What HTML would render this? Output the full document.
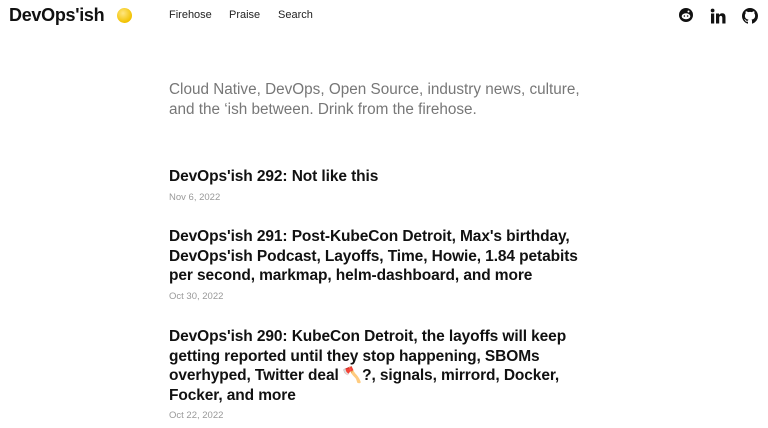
<!DOCTYPE html>
<html><head><meta charset="utf-8"><style>
body{margin:0;background:#fff;font-family:"Liberation Sans",sans-serif;color:#111;width:768px;height:428px;overflow:hidden;position:relative}
.logo{position:absolute;left:9px;top:5px;font-size:18px;font-weight:bold;letter-spacing:-0.3px}
.sun{position:absolute;left:117px;top:8px;width:15px;height:15px;border-radius:50%;background:radial-gradient(circle at 40% 35%,#ffe680,#f2c200 70%,#d9a800)}
.nav{position:absolute;top:9px;font-size:11px;color:#222}
.ic{position:absolute;top:8px}
.tag{position:absolute;left:169px;top:80px;font-size:15.3px;color:#777;line-height:20px;width:420px}
.post{position:absolute;left:169px;width:430px}
.post h2{margin:0;font-size:15.5px;line-height:19.5px;font-weight:bold;letter-spacing:-0.1px}
.post .d{font-size:9.5px;color:#999;margin-top:5px}
</style></head><body>
<div class="logo">DevOps'ish</div><div class="sun"></div>
<div class="nav" style="left:169px">Firehose</div>
<div class="nav" style="left:229px">Praise</div>
<div class="nav" style="left:278px">Search</div>
<svg class="ic" style="left:679px" width="14" height="14" viewBox="0 0 14 14"><circle cx="7" cy="7" r="7" fill="#111"/><ellipse cx="7" cy="8.3" rx="4.3" ry="3" fill="#fff"/><circle cx="5.4" cy="8" r=".8" fill="#111"/><circle cx="8.6" cy="8" r=".8" fill="#111"/><circle cx="9.5" cy="3.5" r="1" fill="#fff"/></svg>
<svg class="ic" style="left:710px" width="16" height="16" viewBox="0 0 16 16"><rect x="1" y="5.5" width="3.2" height="10" fill="#111"/><circle cx="2.6" cy="2.5" r="1.9" fill="#111"/><path d="M6 5.5h3v1.6c.7-1.2 1.8-1.8 3.2-1.8 2.5 0 3.3 1.6 3.3 4V15.5h-3.2v-5.5c0-1.3-.4-2.1-1.5-2.1-1.2 0-1.6.9-1.600 2.1v5.5H6z" fill="#111"/></svg>
<svg class="ic" style="left:742px" width="16" height="16" viewBox="0 0 16 16"><path fill="#111" d="M8 0C3.58 0 0 3.58 0 8c0 3.54 2.29 6.53 5.47 7.59.4.07.55-.17.55-.38 0-.19-.01-.82-.01-1.49-2.01.37-2.53-.49-2.69-.94-.09-.23-.48-.94-.82-1.13-.28-.15-.68-.52-.01-.53.63-.01 1.08.58 1.23.82.72 1.21 1.87.87 2.33.66.07-.52.28-.87.51-1.07-1.78-.2-3.64-.89-3.64-3.95 0-.87.31-1.59.82-2.15-.08-.2-.36-1.02.08-2.12 0 0 .67-.21 2.2.82.64-.18 1.32-.27 2-.27.68 0 1.36.09 2 .27 1.53-1.04 2.2-.82 2.2-.82.44 1.1.16 1.92.08 2.12.51.56.82 1.27.82 2.15 0 3.07-1.87 3.75-3.65 3.95.29.25.54.73.54 1.48 0 1.07-.01 1.93-.01 2.2 0 .21.15.46.55.38A8.013 8.013 0 0016 8c0-4.42-3.58-8-8-8z"/></svg>
<div class="tag">Cloud Native, DevOps, Open Source, industry news, culture,<br>and the ‘ish between. Drink from the firehose.</div>
<div class="post" style="top:167px"><h2>DevOps'ish 292: Not like this</h2><div class="d">Nov 6, 2022</div></div>
<div class="post" style="top:227px"><h2>DevOps'ish 291: Post-KubeCon Detroit, Max's birthday, DevOps'ish Podcast, Layoffs, Time, Howie, 1.84 petabits per second, markmap, helm-dashboard, and more</h2><div class="d">Oct 30, 2022</div></div>
<div class="post" style="top:327px"><h2>DevOps'ish 290: KubeCon Detroit, the layoffs will keep getting reported until they stop happening, SBOMs overhyped, Twitter deal 🪓?, signals, mirrord, Docker, Focker, and more</h2><div class="d">Oct 22, 2022</div></div>
</body></html>
